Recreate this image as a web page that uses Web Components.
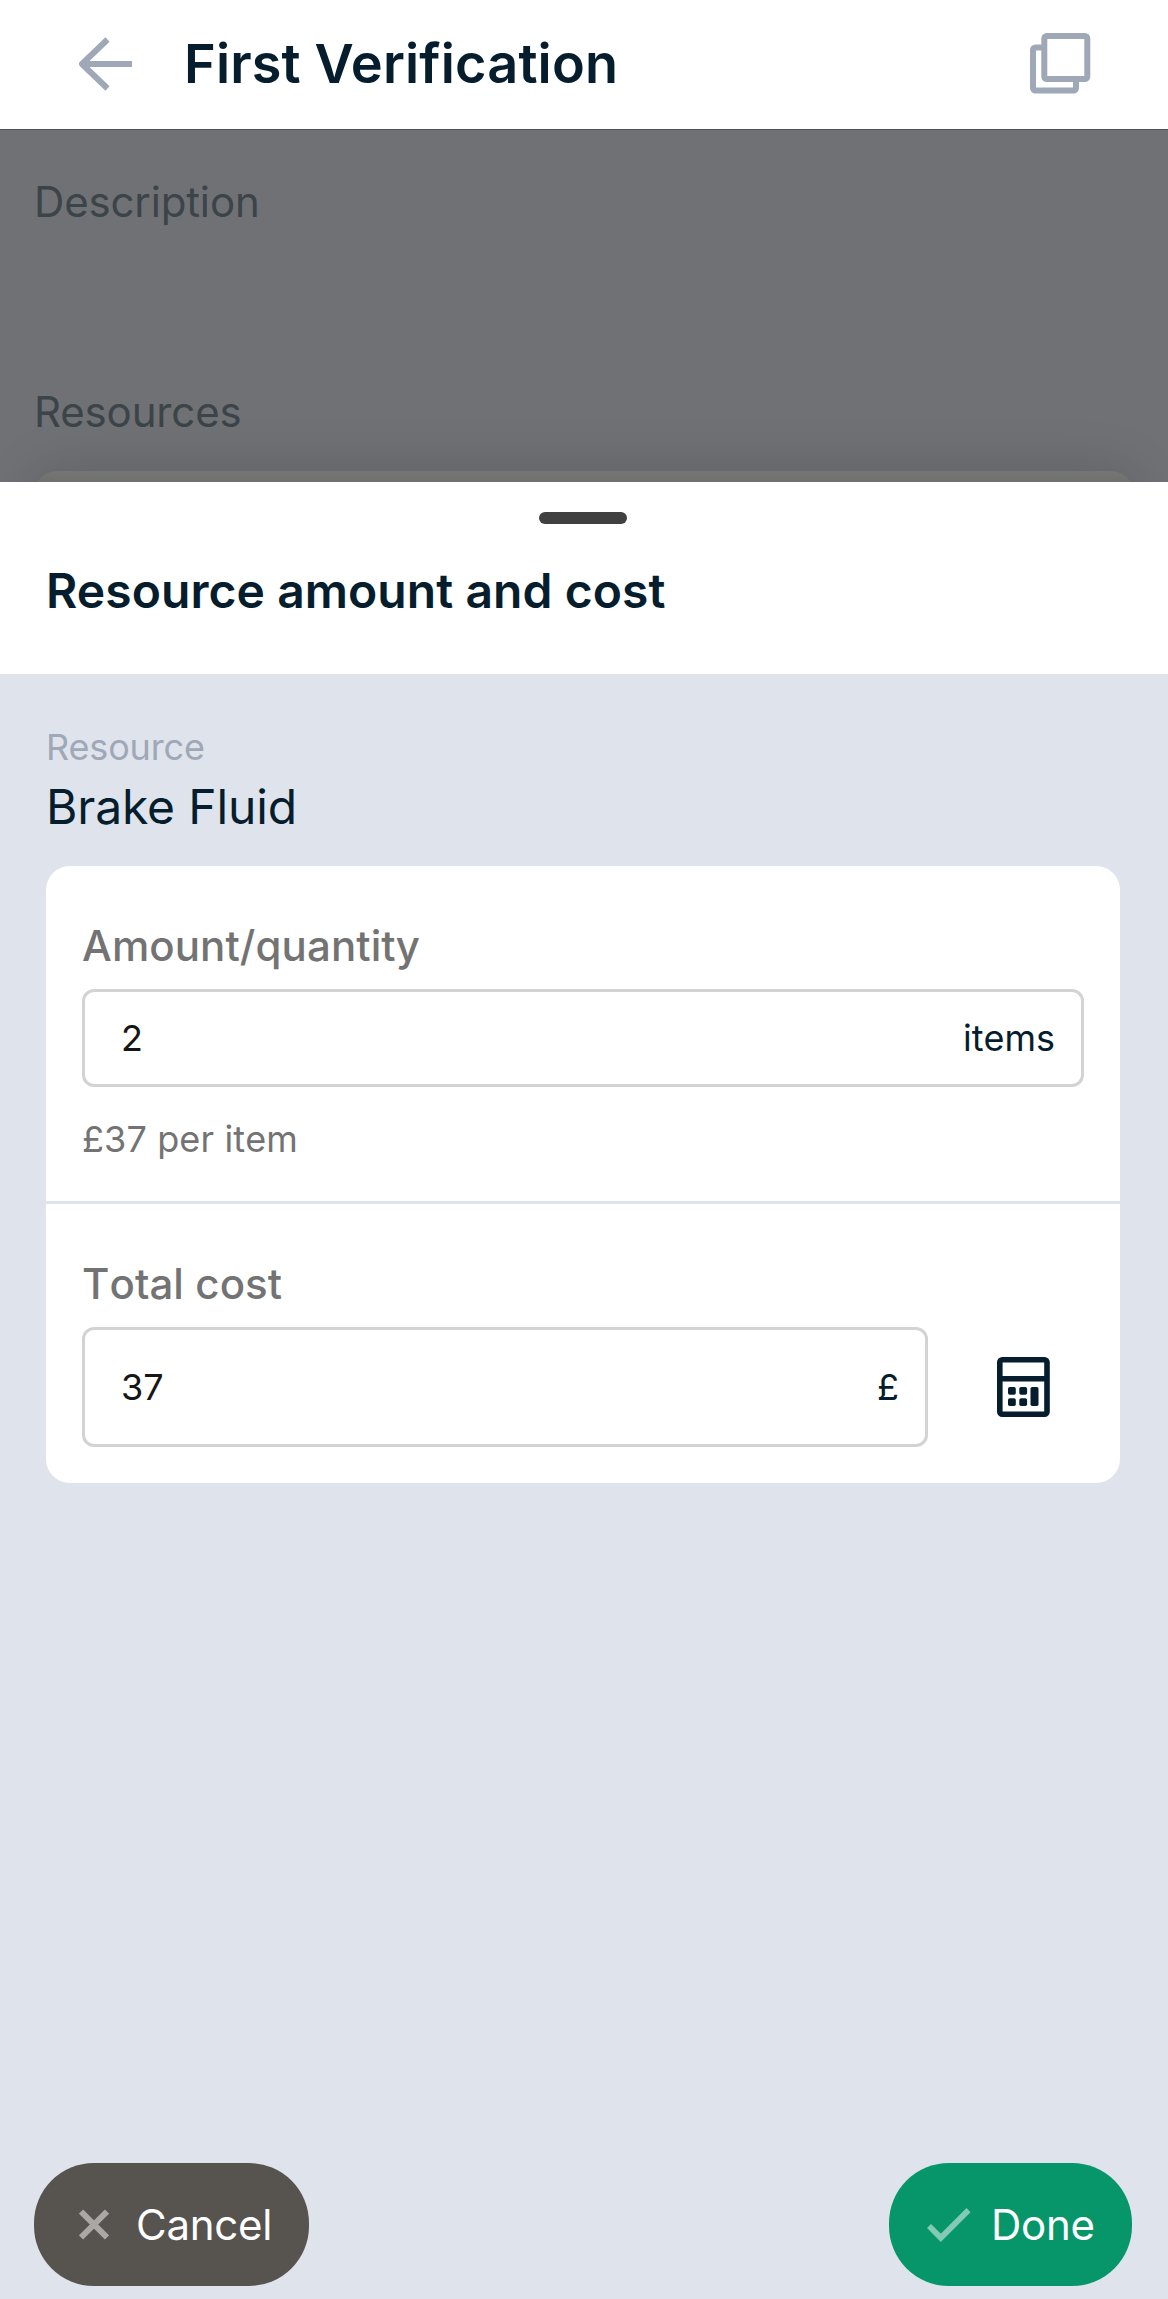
<!DOCTYPE html>
<html lang="en">
<head>
<meta charset="utf-8">
<title>First Verification</title>
<style>
body{
    margin: 0;
    height: 2299px;
    display: flex;
    flex-direction: column;
    overflow: hidden;
    background-color: #dfe3ec;
    color: #051d2c;
    font-family: Inter, "Liberation Sans", sans-serif;
}
</style>
</head>
<body>

<top-bar>First Verification</top-bar>
<dimmed-page>
    <span>Description</span>
    <span>Resources</span>
</dimmed-page>
<bottom-sheet>
    <span slot="title">Resource amount and cost</span>
    <resource-name label="Resource">Brake Fluid</resource-name>
    <form-card>
        <amount-field label="Amount/quantity" value="2" unit="items">
            <span slot="hint">£37 per item</span>
        </amount-field>
        <amount-field class="tall" label="Total cost" value="37" unit="£">
            <calc-icon slot="action"></calc-icon>
        </amount-field>
    </form-card>
    <pill-button slot="actions" kind="cancel">Cancel</pill-button>
    <pill-button slot="actions" kind="done">Done</pill-button>
</bottom-sheet>

<script>
// every element clones its own template into an open shadow root
function build(el, html) {
    const template = document.createElement('template');
    template.innerHTML = html;
    el.attachShadow({mode: 'open'}).appendChild(template.content.cloneNode(true));
}

class TopBar extends HTMLElement {
    constructor() {
        super();
        build(this, `
<style>
:host{
    display: flex;
    align-items: center;
    flex: none;
    box-sizing: border-box;
    height: 130px;
    padding: 0 77px 2px 79px;
    border-bottom: 1px solid #4f5052;
    background-color: white;
}
svg{display: block; flex: none; stroke: #9fa8b7; fill: none;}
h1{
    flex: 1;
    margin: 0 0 0 52px;
    font-size: 54px;
    line-height: 66px;
    font-weight: 600;
    letter-spacing: .15px;
    white-space: nowrap;
}
</style>
<svg width="53" height="54" viewBox="0 0 53 54" stroke-width="6" stroke-linejoin="round">
    <path d="M28.500 2.500 3 27l25.500 24.500M3 27h50"/>
</svg>
<h1><slot></slot></h1>
<svg width="61" height="61" viewBox="0 0 61 61" stroke-width="6">
    <rect x="14.300" y="3" width="43" height="43" rx="2.500"/>
    <path d="M14 14.500H5.500a2.500 2.500 0 0 0-2.500 2.500v38a2.500 2.500 0 0 0 2.500 2.500h38a2.500 2.500 0 0 0 2.500-2.500V46"/>
</svg>
`);
    }
}
customElements.define('top-bar', TopBar);


class DimmedPage extends HTMLElement {
    constructor() {
        super();
        build(this, `
<style>
:host{
    display: flex;
    flex-direction: column;
    flex: none;
    box-sizing: border-box;
    height: 352px;
    padding: 47px 34px 0;
    overflow: hidden;
    background-color: #707175;
    color: #3b4448;
    font-size: 42px;
    line-height: 50px;
    letter-spacing: -.15px;
}
::slotted(span){margin-bottom: 160px;}
::slotted(span:last-of-type){margin-bottom: 34px;}
.list{
    flex: none;
    height: 100px;
    border-radius: 24px;
    background: linear-gradient(#757573, #70706f 11px);
    box-shadow: 0 4px 56px rgba(0, 0, 0, .18);
}
</style>
<slot></slot>
<div class="list"></div>
`);
    }
}
customElements.define('dimmed-page', DimmedPage);


class BottomSheet extends HTMLElement {
    constructor() {
        super();
        build(this, `
<style>
:host{
    display: flex;
    flex-direction: column;
    flex: 1;
}
header{
    flex: none;
    box-sizing: border-box;
    height: 192px;
    padding: 30px 46px 0;
    background-color: white;
}
.handle{
    width: 88px;
    height: 12px;
    margin: 0 auto;
    border-radius: 6px;
    background-color: #404040;
    transform: translateX(-1px);
}
h2{
    margin: 37px 0 0;
    font-size: 48px;
    line-height: 60px;
    font-weight: 600;
    letter-spacing: .07px;
    white-space: nowrap;
}
main{
    flex: 1;
    padding: 51px 48px 0 46px;
}
footer{
    display: flex;
    justify-content: space-between;
    padding: 0 36px 13px 34px;
}
</style>
<header>
    <div class="handle"></div>
    <h2><slot name="title"></slot></h2>
</header>
<main><slot></slot></main>
<footer><slot name="actions"></slot></footer>
`);
    }
}
customElements.define('bottom-sheet', BottomSheet);


class ResourceName extends HTMLElement {
    constructor() {
        super();
        build(this, `
<style>
:host{display: block; margin-bottom: 30px; letter-spacing: -.15px;}
.label{
    margin-bottom: 9px;
    color: #9fa8b7;
    font-size: 36px;
    line-height: 44px;
}
.name{font-size: 48px; line-height: 58px;}
</style>
<div class="label"></div>
<div class="name"><slot></slot></div>
`);
        this.shadowRoot.querySelector('.label').textContent = this.getAttribute('label');
    }
}
customElements.define('resource-name', ResourceName);


class FormCard extends HTMLElement {
    constructor() {
        super();
        build(this, `
<style>
:host{
    display: block;
    border-radius: 24px;
    background-color: white;
}
::slotted(:not(:first-child)){border-top: 3px solid #dfe3ec;}
</style>
<slot></slot>
`);
    }
}
customElements.define('form-card', FormCard);


class AmountField extends HTMLElement {
    constructor() {
        super();
        build(this, `
<style>
:host{display: block; padding: 55px 36px 40px; font-kerning: none;}
:host(.tall){padding-bottom: 36px;}
.label{
    margin-bottom: 18px;
    color: #737373;
    font-size: 42px;
    line-height: 50px;
    font-weight: 500;
    letter-spacing: .1px;
}
.row{display: flex; align-items: center;}
.box{
    flex: 1;
    display: flex;
    align-items: center;
    justify-content: space-between;
    box-sizing: border-box;
    height: 98px;
    padding: 0 26px 0 36px;
    border: 3px solid #d3d3d3;
    border-radius: 12px;
    font-size: 36px;
}
:host(.tall) .box{height: 120px;}
.value{color: #161616; font-kerning: normal;}
::slotted([slot=hint]){
    display: block;
    margin-top: 30px;
    color: #737373;
    font-size: 36px;
    line-height: 44px;
    letter-spacing: .12px;
}
</style>
<div class="label"></div>
<div class="row">
    <div class="box"><span class="value"></span><span class="unit"></span></div>
    <slot name="action"></slot>
</div>
<slot name="hint"></slot>
`);
        for (const name of ['label', 'value', 'unit']) {
            this.shadowRoot.querySelector('.' + name).textContent = this.getAttribute(name);
        }
    }
}
customElements.define('amount-field', AmountField);


class CalcIcon extends HTMLElement {
    constructor() {
        super();
        build(this, `
<style>
:host{display: block; padding: 0 34px 0 69px;}
svg{display: block; fill: #051d2c;}
</style>
<svg width="53" height="60" viewBox="0 0 53 60">
    <rect x="2.800" y="2.800" width="47.200" height="54.400" rx="2.500" fill="none" stroke="#051d2c" stroke-width="5.600"/>
    <rect x="4" y="19" width="45" height="5.500"/>
    <rect x="11" y="30" width="7.800" height="7.800" rx="1.800"/>
    <rect x="22.300" y="30" width="7.800" height="7.800" rx="1.800"/>
    <rect x="11" y="41.200" width="7.800" height="7.800" rx="1.800"/>
    <rect x="22.300" y="41.200" width="7.800" height="7.800" rx="1.800"/>
    <rect x="33.500" y="30" width="8" height="19" rx="1.800"/>
</svg>
`);
    }
}
customElements.define('calc-icon', CalcIcon);


const icons = {
    cancel: '<svg width="30" height="31" viewBox="0 0 30 31" fill="none" stroke="#aaa8a5" stroke-width="6"><path d="M2 2.500l26 26M28 2.500l-26 26"/></svg>',
    done: '<svg width="44" height="34" viewBox="0 0 44 34" fill="#82cab3"><path d="M4 16l9.800 9.800L39.500 0l4 4.200L13.800 34 0 20z"/></svg>'
};

class PillButton extends HTMLElement {
    constructor() {
        super();
        build(this, `
<style>
:host{
    display: flex;
    align-items: center;
    box-sizing: border-box;
    width: 275px;
    height: 123px;
    padding-left: 45px;
    gap: 27px;
    border-radius: 60px;
    background-color: #57534e;
    color: white;
    font-size: 42px;
    font-weight: 390;
    letter-spacing: -.25px;
    white-space: nowrap;
}
:host([kind=done]){
    width: 243px;
    padding-left: 38px;
    gap: 20px;
    background-color: #069669;
}
svg{display: block; flex: none;}
</style>
${icons[this.getAttribute('kind')]}
<slot></slot>
`);
    }
}
customElements.define('pill-button', PillButton);
</script>
</body>
</html>
